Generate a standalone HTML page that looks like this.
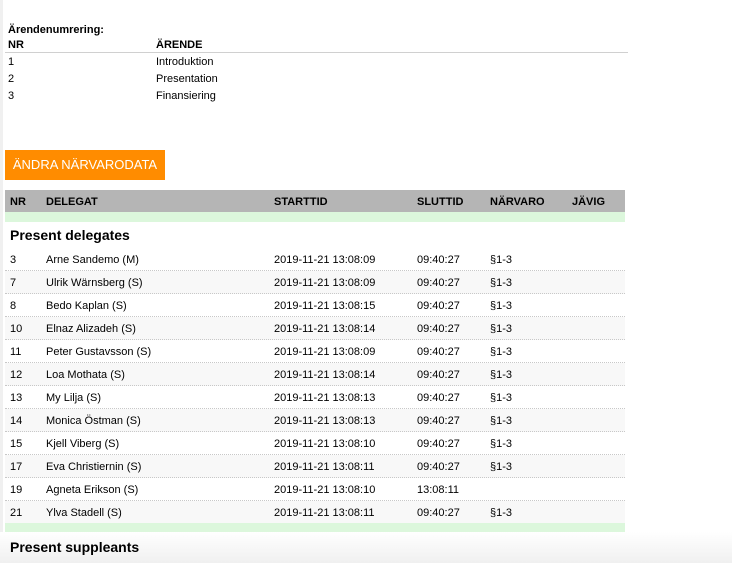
<!DOCTYPE html>
<html><head><meta charset="utf-8"><style>
body{margin:0;width:732px;height:563px;overflow:hidden;background:#fff;font-family:"Liberation Sans",Arial,sans-serif;color:#000;position:relative}
.a{position:absolute;font-size:11px;white-space:nowrap}
.b{font-weight:bold}
.row{position:absolute;left:5px;width:620px;height:22px;border-bottom:1px dotted #c8c8c8;font-size:11px}
.row span{position:absolute;top:6px;white-space:nowrap}
.alt{background:#f8f8f8}
</style></head><body>
<div style="position:absolute;left:0;top:0;width:3px;height:563px;background:#f0f0f0"></div>
<div class="a b" style="left:8px;top:24px">Ärendenumrering:</div>
<div class="a b" style="left:8px;top:39px">NR</div>
<div class="a b" style="left:156px;top:39px">ÄRENDE</div>
<div style="position:absolute;left:5px;top:52px;width:623px;height:1px;background:#d0d0d0"></div>
<div class="a" style="left:8px;top:56px">1</div><div class="a" style="left:156px;top:56px">Introduktion</div>
<div class="a" style="left:8px;top:73px">2</div><div class="a" style="left:156px;top:73px">Presentation</div>
<div class="a" style="left:8px;top:90px">3</div><div class="a" style="left:156px;top:90px">Finansiering</div>
<div style="position:absolute;left:5px;top:150px;width:160px;height:30px;background:#ff8c00;color:#fff;font-size:13px;line-height:30px;text-align:center">ÄNDRA NÄRVARODATA</div>
<div style="position:absolute;left:5px;top:190px;width:620px;height:22px;background:#b5b5b5"></div>
<div class="a b" style="left:10px;top:196px">NR</div>
<div class="a b" style="left:46px;top:196px">DELEGAT</div>
<div class="a b" style="left:274px;top:196px">STARTTID</div>
<div class="a b" style="left:417px;top:196px">SLUTTID</div>
<div class="a b" style="left:490px;top:196px">NÄRVARO</div>
<div class="a b" style="left:572px;top:196px">JÄVIG</div>
<div style="position:absolute;left:5px;top:212px;width:620px;height:10px;background:#dcf7dc"></div>
<div class="a b" style="left:10px;top:227px;font-size:14px">Present delegates</div>
<div class="row" style="top:248px"><span style="left:5px">3</span><span style="left:41px">Arne Sandemo (M)</span><span style="left:269px">2019-11-21 13:08:09</span><span style="left:412px">09:40:27</span><span style="left:485px">§1-3</span></div>
<div class="row alt" style="top:271px"><span style="left:5px">7</span><span style="left:41px">Ulrik Wärnsberg (S)</span><span style="left:269px">2019-11-21 13:08:09</span><span style="left:412px">09:40:27</span><span style="left:485px">§1-3</span></div>
<div class="row" style="top:294px"><span style="left:5px">8</span><span style="left:41px">Bedo Kaplan (S)</span><span style="left:269px">2019-11-21 13:08:15</span><span style="left:412px">09:40:27</span><span style="left:485px">§1-3</span></div>
<div class="row alt" style="top:317px"><span style="left:5px">10</span><span style="left:41px">Elnaz Alizadeh (S)</span><span style="left:269px">2019-11-21 13:08:14</span><span style="left:412px">09:40:27</span><span style="left:485px">§1-3</span></div>
<div class="row" style="top:340px"><span style="left:5px">11</span><span style="left:41px">Peter Gustavsson (S)</span><span style="left:269px">2019-11-21 13:08:09</span><span style="left:412px">09:40:27</span><span style="left:485px">§1-3</span></div>
<div class="row alt" style="top:363px"><span style="left:5px">12</span><span style="left:41px">Loa Mothata (S)</span><span style="left:269px">2019-11-21 13:08:14</span><span style="left:412px">09:40:27</span><span style="left:485px">§1-3</span></div>
<div class="row" style="top:386px"><span style="left:5px">13</span><span style="left:41px">My Lilja (S)</span><span style="left:269px">2019-11-21 13:08:13</span><span style="left:412px">09:40:27</span><span style="left:485px">§1-3</span></div>
<div class="row alt" style="top:409px"><span style="left:5px">14</span><span style="left:41px">Monica Östman (S)</span><span style="left:269px">2019-11-21 13:08:13</span><span style="left:412px">09:40:27</span><span style="left:485px">§1-3</span></div>
<div class="row" style="top:432px"><span style="left:5px">15</span><span style="left:41px">Kjell Viberg (S)</span><span style="left:269px">2019-11-21 13:08:10</span><span style="left:412px">09:40:27</span><span style="left:485px">§1-3</span></div>
<div class="row alt" style="top:455px"><span style="left:5px">17</span><span style="left:41px">Eva Christiernin (S)</span><span style="left:269px">2019-11-21 13:08:11</span><span style="left:412px">09:40:27</span><span style="left:485px">§1-3</span></div>
<div class="row" style="top:478px"><span style="left:5px">19</span><span style="left:41px">Agneta Erikson (S)</span><span style="left:269px">2019-11-21 13:08:10</span><span style="left:412px">13:08:11</span></div>
<div class="row alt" style="top:501px;border-bottom:none"><span style="left:5px">21</span><span style="left:41px">Ylva Stadell (S)</span><span style="left:269px">2019-11-21 13:08:11</span><span style="left:412px">09:40:27</span><span style="left:485px">§1-3</span></div>
<div style="position:absolute;left:5px;top:523px;width:620px;height:9px;background:#dcf7dc"></div>
<div style="position:absolute;left:0;top:532px;width:732px;height:31px;background:linear-gradient(#fff,#f0f0f0)"></div>
<div class="a b" style="left:10px;top:539px;font-size:14px">Present suppleants</div>
</body></html>
